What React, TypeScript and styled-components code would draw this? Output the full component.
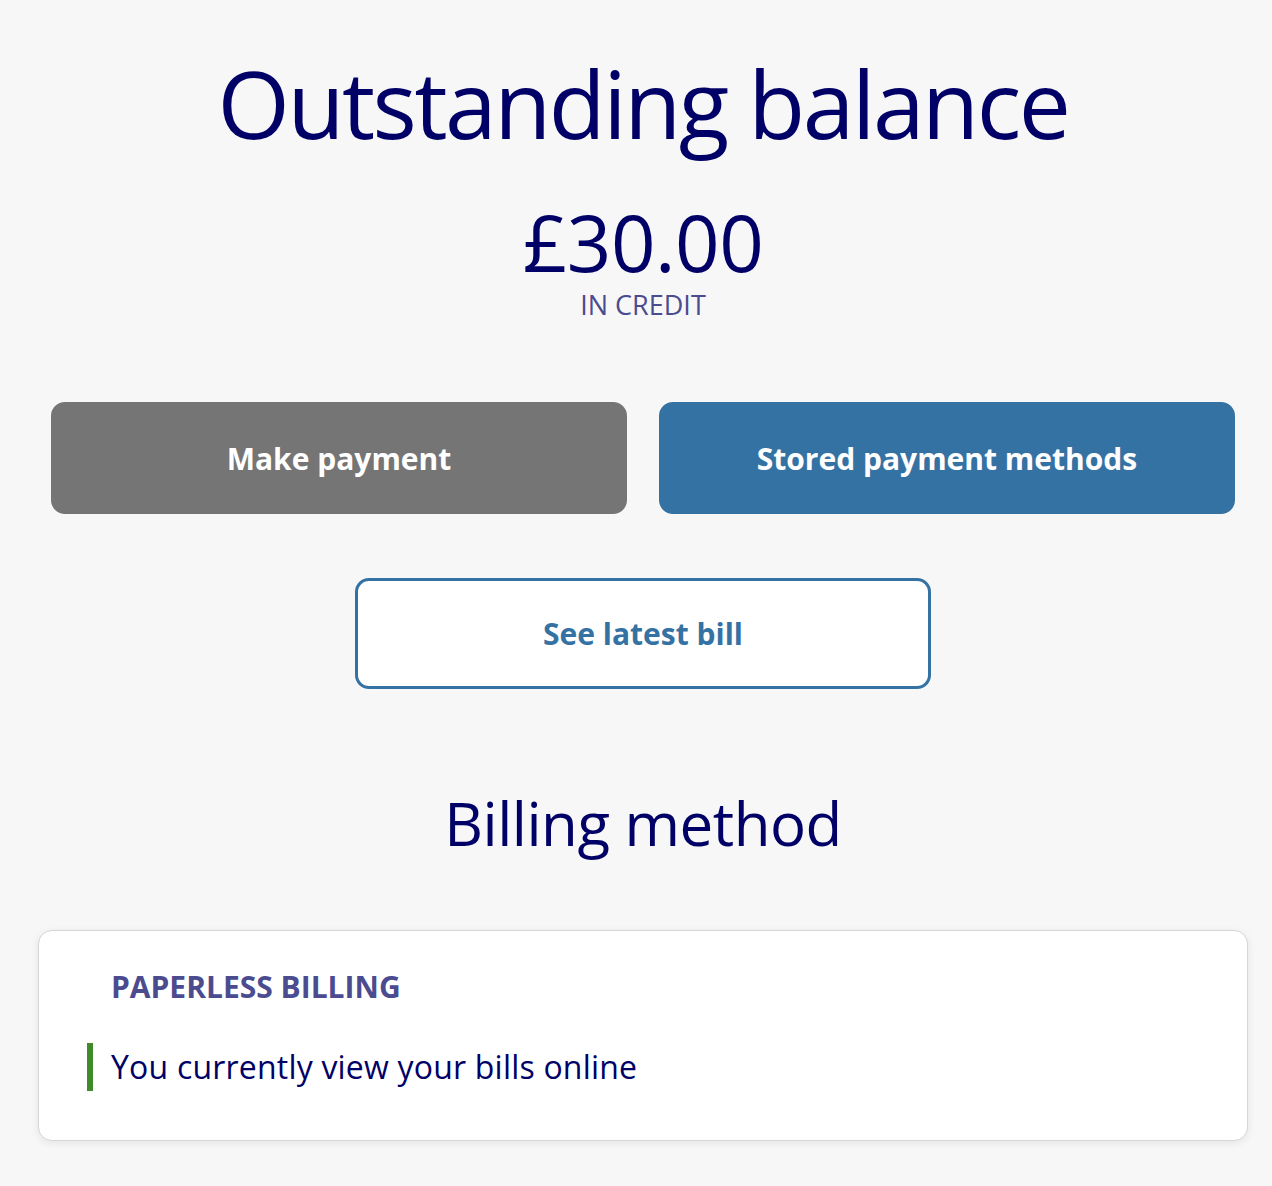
import styled, { createGlobalStyle } from 'styled-components';

const GlobalStyle = createGlobalStyle`
  html, body {
    margin: 0;
    padding: 0;
    background: #f7f7f7;
    font-family: 'Open Sans', 'Noto Sans', Arial, sans-serif;
  }
`;

const Page = styled.main`
  padding: 48px 24px 40px 38px;
  display: flex;
  flex-direction: column;
  align-items: stretch;
`;

const Balance = styled.section`
  display: flex;
  flex-direction: column;
  align-items: center;
  color: #000066;
`;

const Title = styled.h1`
  margin: 0;
  font-size: 93px;
  font-weight: 400;
  line-height: 110px;
  letter-spacing: -2.5px;
`;

const Amount = styled.div`
  margin-top: 42px;
  font-size: 78px;
  line-height: 84px;
  letter-spacing: -0.5px;
`;

const Status = styled.div`
  margin-top: 5px;
  font-size: 27px;
  line-height: 32px;
  color: #4b4b8f;
`;

const Actions = styled.div`
  margin-top: 81px;
  padding: 0 13px;
  display: flex;
  flex-direction: column;
  align-items: center;
  gap: 64px;
`;

const ButtonRow = styled.div`
  width: 100%;
  display: grid;
  grid-template-columns: 1fr 1fr;
  gap: 32px;
`;

const Button = styled.button<{ $variant: 'grey' | 'primary' | 'outline' }>`
  height: 112px;
  border-radius: 14px;
  font-family: inherit;
  font-size: 30px;
  font-weight: 700;
  cursor: pointer;
  border: 3px solid
    ${(p) => (p.$variant === 'grey' ? '#757575' : '#3572a4')};
  background: ${(p) =>
    p.$variant === 'grey' ? '#757575' : p.$variant === 'primary' ? '#3572a4' : '#ffffff'};
  color: ${(p) => (p.$variant === 'outline' ? '#3572a4' : '#ffffff')};
`;

const BillButton = styled(Button)`
  width: 576px;
  height: 111px;
`;

const SectionTitle = styled.h2`
  margin: 94px 0 0;
  text-align: center;
  font-size: 60px;
  font-weight: 400;
  line-height: 80px;
  color: #000066;
  letter-spacing: -0.5px;
`;

const Card = styled.div`
  margin-top: 67px;
  background: #ffffff;
  border: 1px solid #d6d6d6;
  border-radius: 14px;
  box-shadow: 0 2px 8px rgba(0, 0, 0, 0.08);
  padding: 36px 48px 49px;
`;

const CardLabel = styled.div`
  padding-left: 24px;
  font-size: 30px;
  font-weight: 700;
  line-height: 40px;
  color: #4b4b8f;
`;

const Note = styled.p`
  margin: 36px 0 0;
  border-left: 6px solid #3f8a29;
  padding-left: 18px;
  font-size: 32px;
  line-height: 48px;
  color: #000066;
  letter-spacing: 0.2px;
`;

export default function App() {
  return (
    <>
      <GlobalStyle />
      <Page>
        <Balance>
          <Title>Outstanding balance</Title>
          <Amount>£30.00</Amount>
          <Status>IN CREDIT</Status>
        </Balance>
        <Actions>
          <ButtonRow>
            <Button $variant="grey">Make payment</Button>
            <Button $variant="primary">Stored payment methods</Button>
          </ButtonRow>
          <BillButton $variant="outline">See latest bill</BillButton>
        </Actions>
        <SectionTitle>Billing method</SectionTitle>
        <Card>
          <CardLabel>PAPERLESS BILLING</CardLabel>
          <Note>You currently view your bills online</Note>
        </Card>
      </Page>
    </>
  );
}
